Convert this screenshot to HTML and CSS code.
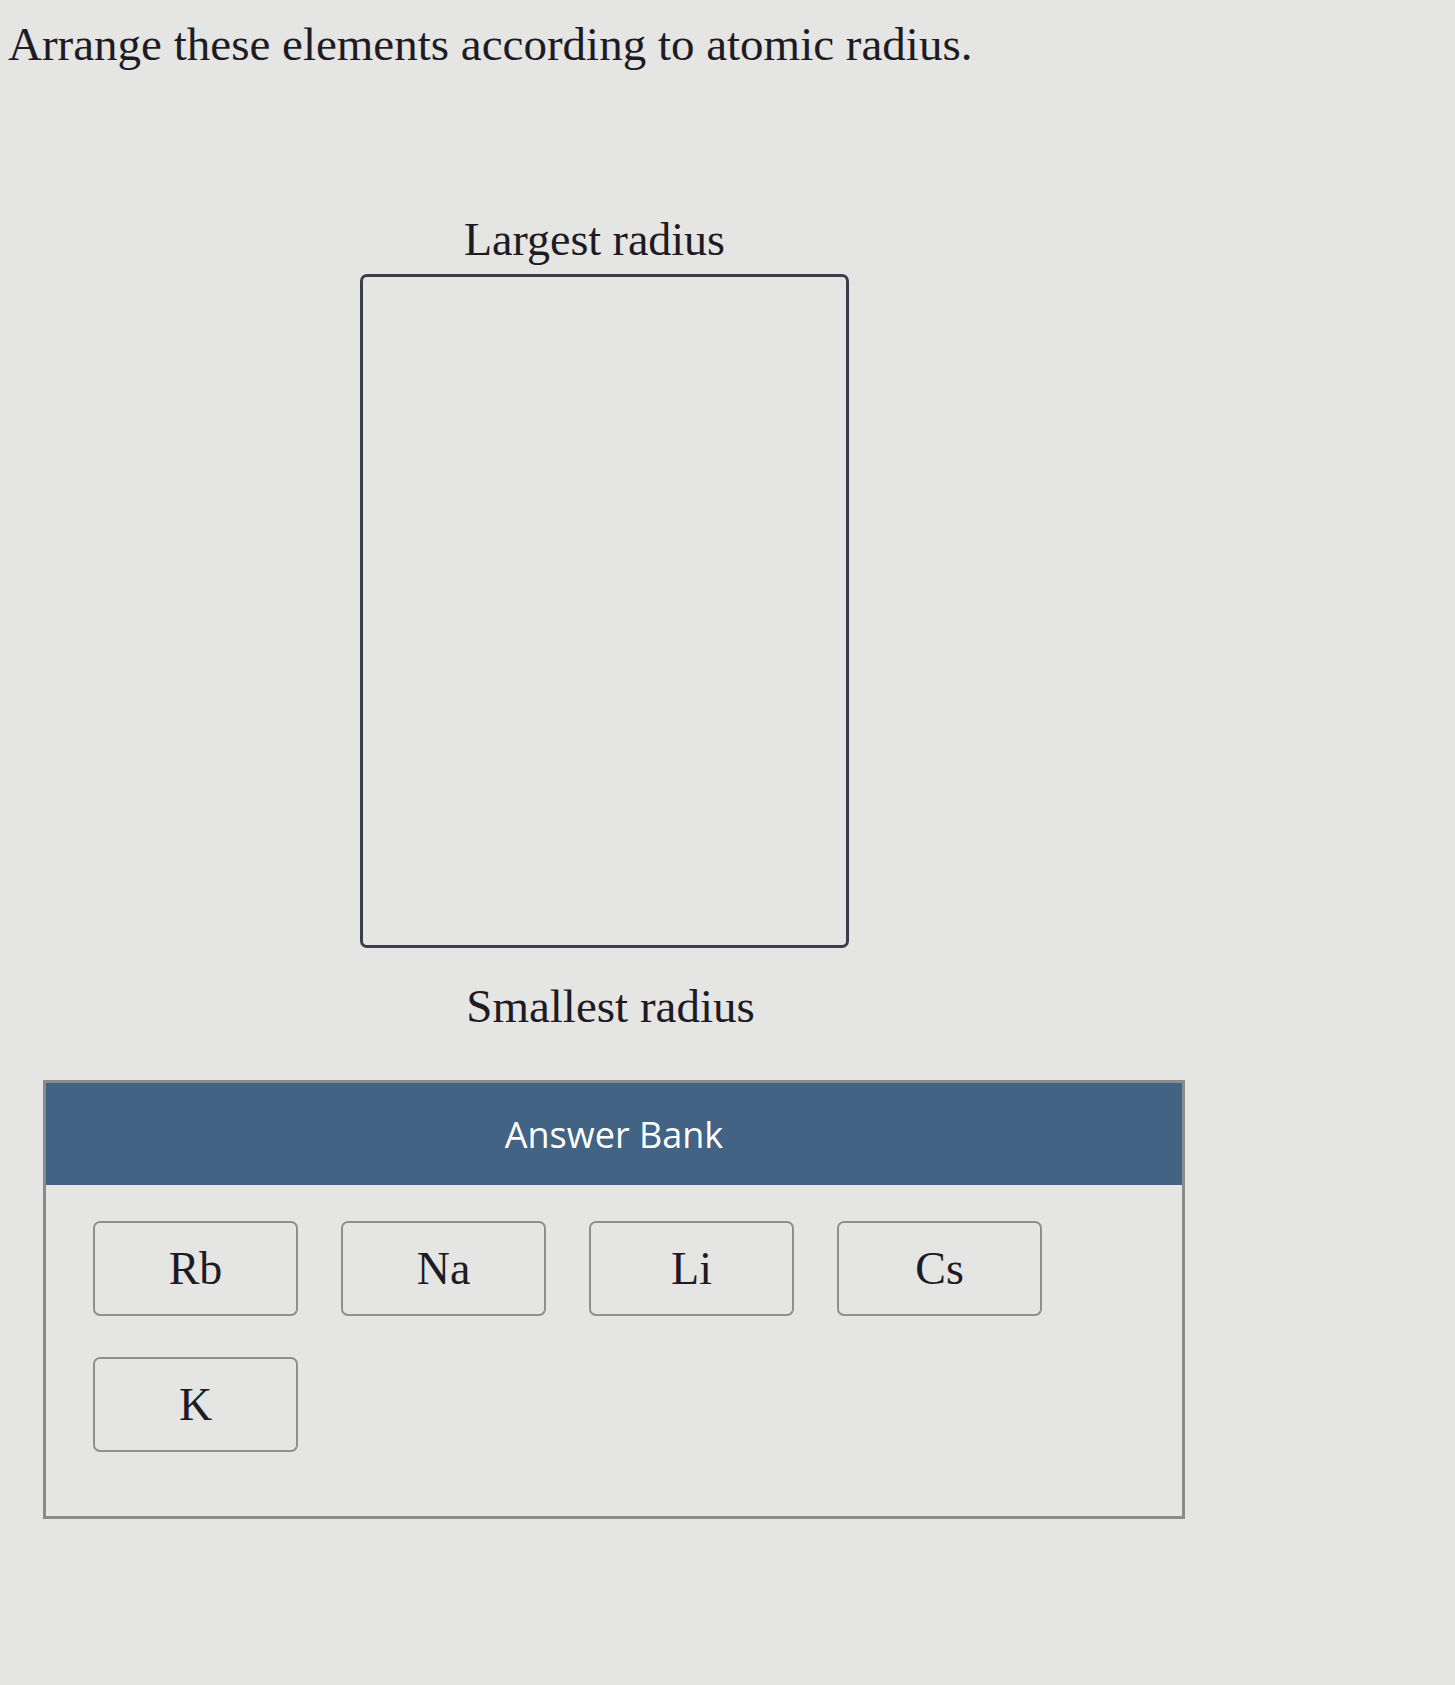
FILE: index.html
```html
<!DOCTYPE html>
<html lang="en">
<head>
  <meta charset="UTF-8" />
  <title>Atomic Radius Ranking</title>
  <link rel="stylesheet" href="styles.css">
</head>
<body>
  <h1 class="prompt">Arrange these elements according to atomic radius.</h1>

  <div class="sorter">
    <div class="end-label top">Largest radius</div>
    <div class="dropzone" id="dropzone"></div>
    <div class="end-label bottom">Smallest radius</div>
  </div>

  <div class="bank">
    <div class="bank-head">Answer Bank</div>
    <div class="bank-items" id="bankItems">
      <div class="tile">Rb</div>
      <div class="tile">Na</div>
      <div class="tile">Li</div>
      <div class="tile">Cs</div>
      <div class="tile">K</div>
    </div>
  </div>
</body>
</html>
```

FILE: styles.css
```css
* { box-sizing: border-box; }
body {
  margin: 8px;
  background: #e5e5e3;
  color: #1e1b24;
  font-family: "Liberation Serif", "Times New Roman", serif;
}
.prompt {
  margin: 10px 0 0 0;
  font-size: 47px;
  font-weight: normal;
  line-height: 52px;
}
.sorter {
  width: 489px;
  margin: 144px 0 0 352px;
}
.end-label {
  text-align: center;
  font-size: 46px;
  line-height: 52px;
}
.end-label.top {
  padding-right: 20px;
}
.end-label.bottom {
  font-size: 47px;
  margin-top: 32px;
  padding-left: 12px;
}
.dropzone {
  height: 674px;
  margin-top: 8px;
  border: 3px solid #3b3d4c;
  border-radius: 7px;
}
.bank {
  width: 1142px;
  margin: 48px 0 0 35px;
  border: 3px solid #8b8b8b;
}
.bank-head {
  height: 102px;
  background-color: #436384;
  color: #fff;
  font-family: "Open Sans", sans-serif;
  font-size: 36px;
  font-weight: 500;
  display: flex;
  align-items: center;
  justify-content: center;
}
.bank-items {
  display: grid;
  grid-template-columns: repeat(4, 205px);
  column-gap: 43px;
  row-gap: 41px;
  padding: 36px 47px 64px;
}
.tile {
  height: 95px;
  border: 2px solid #8f8f8f;
  border-radius: 7px;
  display: flex;
  align-items: center;
  justify-content: center;
  font-size: 46px;
  cursor: pointer;
}
```
